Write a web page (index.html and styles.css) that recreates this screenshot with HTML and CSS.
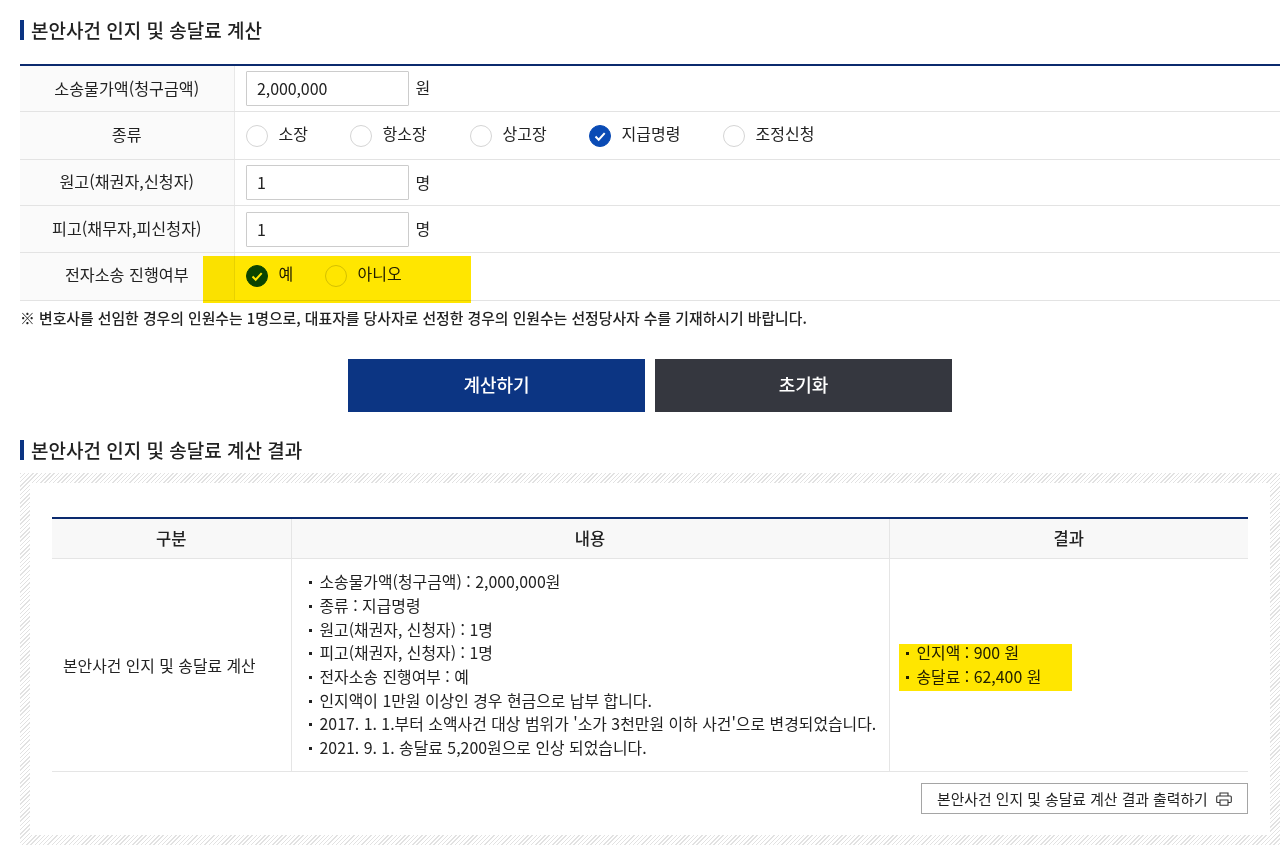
FILE: index.html
```html
<!DOCTYPE html>
<html lang="ko">
<head>
<meta charset="utf-8">
<title>본안사건 인지 및 송달료 계산</title>
<link rel="stylesheet" href="styles.css">
</head>
<body>
<main class="page">
  <h2 class="title first">본안사건 인지 및 송달료 계산</h2>
  <div class="form-wrap">
    <table class="form">
      <tr class="r1">
        <th>소송물가액(청구금액)</th>
        <td><div class="line"><span class="input">2,000,000</span><span class="unit">원</span></div></td>
      </tr>
      <tr class="r2">
        <th>종류</th>
        <td>
          <div class="radios">
            <span class="radio w1"><i class="dot"></i>소장</span>
            <span class="radio w2"><i class="dot"></i>항소장</span>
            <span class="radio w3"><i class="dot"></i>상고장</span>
            <span class="radio w4"><i class="dot on"><svg viewBox="0 0 22 22"><path d="M6.5 11.500l3.200 3.200 6-6.600" fill="none" stroke="#fff" stroke-width="2"/></svg></i>지급명령</span>
            <span class="radio"><i class="dot"></i>조정신청</span>
          </div>
        </td>
      </tr>
      <tr class="r3">
        <th>원고(채권자,신청자)</th>
        <td><div class="line"><span class="input">1</span><span class="unit">명</span></div></td>
      </tr>
      <tr class="r4">
        <th>피고(채무자,피신청자)</th>
        <td><div class="line"><span class="input">1</span><span class="unit">명</span></div></td>
      </tr>
      <tr class="r5">
        <th>전자소송 진행여부</th>
        <td>
          <div class="radios">
            <span class="radio w5"><i class="dot on"><svg viewBox="0 0 22 22"><path d="M6.5 11.500l3.200 3.200 6-6.600" fill="none" stroke="#fff" stroke-width="2"/></svg></i>예</span>
            <span class="radio"><i class="dot"></i>아니오</span>
          </div>
        </td>
      </tr>
    </table>
    <div class="marker"></div>
  </div>
  <p class="note">※ 변호사를 선임한 경우의 인원수는 1명으로, 대표자를 당사자로 선정한 경우의 인원수는 선정당사자 수를 기재하시기 바랍니다.</p>
  <div class="actions">
    <button class="btn calc" type="button">계산하기</button>
    <button class="btn reset" type="button">초기화</button>
  </div>
  <h2 class="title second">본안사건 인지 및 송달료 계산 결과</h2>
  <section class="hatch">
    <div class="inner">
      <table class="result">
        <colgroup><col class="c1"><col class="c2"><col class="c3"></colgroup>
        <thead>
          <tr><th>구분</th><th>내용</th><th>결과</th></tr>
        </thead>
        <tbody>
          <tr>
            <td class="name">본안사건 인지 및 송달료 계산</td>
            <td class="detail">
              <ul class="list">
                <li>소송물가액(청구금액) : 2,000,000원</li>
                <li>종류 : 지급명령</li>
                <li>원고(채권자, 신청자) : 1명</li>
                <li>피고(채권자, 신청자) : 1명</li>
                <li>전자소송 진행여부 : 예</li>
                <li>인지액이 1만원 이상인 경우 현금으로 납부 합니다.</li>
                <li>2017. 1. 1.부터 소액사건 대상 범위가 '소가 3천만원 이하 사건'으로 변경되었습니다.</li>
                <li>2021. 9. 1. 송달료 5,200원으로 인상 되었습니다.</li>
              </ul>
            </td>
            <td class="sum">
              <ul class="list hl">
                <li>인지액 : 900 원</li>
                <li>송달료 : 62,400 원</li>
              </ul>
              <div class="marker2"></div>
            </td>
          </tr>
        </tbody>
      </table>
      <div class="print-row">
        <button class="print" type="button">본안사건 인지 및 송달료 계산 결과 출력하기
          <svg class="pic" viewBox="0 0 16 14"><path d="M4 4V1h8v3M4 10.500H1.600A.9.9 0 0 1 .7 9.600V5A1 1 0 0 1 1.700 4h12.600a1 1 0 0 1 1 1v4.600a.9.9 0 0 1-.9.9H12M4 8h8v5.300H4z" fill="none" stroke="#333" stroke-width="1.100"/></svg>
        </button>
      </div>
    </div>
  </section>
</main>
</body>
</html>
```
FILE: styles.css
```css
* { box-sizing: border-box; }
html, body { margin: 0; padding: 0; background: #fff; }
body {
  font-family: "Noto Sans CJK KR", "Noto Sans", sans-serif;
  color: #222;
  font-size: 16px;
}
.page { padding: 18px 0 8px 20px; overflow: hidden; }

.title {
  margin: 0;
  height: 24px;
  line-height: 24px;
  font-size: 19px;
  font-weight: 500;
  color: #222;
  display: flex;
  align-items: center;
  gap: 7px;
}
.title::before {
  content: "";
  width: 4px;
  height: 20px;
  background: #0b3482;
}
.title.second { margin-top: 26px; }

.form-wrap { position: relative; margin-top: 22px; }
.form {
  width: 100%;
  border-collapse: collapse;
  border-top: 2px solid #0b2a6e;
  table-layout: fixed;
}
.form th {
  width: 214px;
  background: #fafafa;
  font-weight: 400;
  font-size: 16.200px;
  text-align: center;
  border-bottom: 1px solid #e3e3e3;
  border-right: 1px solid #e8e8e8;
  padding: 0;
}
.form td {
  border-bottom: 1px solid #e3e3e3;
  padding: 0 0 0 11px;
}
.r1 { height: 46px; }
.r2 { height: 48px; }
.r3 { height: 46px; }
.r4 { height: 47px; }
.r5 { height: 48px; }
.form .r2 th { padding-bottom: 3px; }
.form .r3 th, .form .r4 th { padding-bottom: 2px; }
.form .r3 td, .form .r4 td { padding-top: 1px; }
.form .r5 th { padding-bottom: 5px; }
.form .r5 td { padding-bottom: 3px; }
.line { display: flex; align-items: center; gap: 7px; }
.input {
  width: 163px;
  height: 35px;
  border: 1px solid #ccc;
  border-radius: 1px;
  background: #fff;
  padding-left: 10.500px;
  line-height: 33px;
  font-size: 16px;
  letter-spacing: -0.1px;
  color: #222;
}
.unit { position: relative; top: -1px; }
.radios { display: flex; align-items: center; padding-bottom: 4px; }
.radio { display: flex; align-items: center; gap: 11px; font-size: 16px; }
.radio.w1 { width: 104px; }
.radio.w2 { width: 120px; }
.radio.w3 { width: 119px; }
.radio.w4 { width: 134px; }
.radio.w5 { width: 79px; }
.dot {
  display: block;
  width: 22px;
  height: 22px;
  border: 1px solid #d5d5d5;
  border-radius: 50%;
  background: #fff;
  position: relative;
  top: 3px;
}
.dot.on { background: #0a4bb5; border-color: #0a4bb5; }
.dot svg { display: block; width: 22px; height: 22px; margin: -1px; }
.marker {
  position: absolute;
  left: 183px;
  top: 192px;
  width: 268px;
  height: 47px;
  background: #ffe600;
  mix-blend-mode: multiply;
}

.note {
  margin: 6px 0 0;
  font-size: 14.850px;
  line-height: 22px;
  font-weight: 500;
  color: #222;
}
.actions {
  display: flex;
  justify-content: center;
  gap: 10px;
  margin: 30px 0 0 -20px;
  padding-left: 20px;
  width: 1280px;
}
.btn {
  width: 297px;
  height: 53px;
  border: 0;
  font-family: inherit;
  font-size: 18px;
  font-weight: 500;
  color: #fff;
  padding: 0 0 2px;
}
.calc { background: #0c3583; }
.reset { background: #35373f; }

.hatch {
  margin-top: 11px;
  padding: 10px;
  height: 372px;
  background: repeating-linear-gradient(135deg, #e2e2e2 0 1px, #fff 1px 3px);
}
.inner {
  background: #fff;
  height: 352px;
  padding: 34px 22px 0;
}
.result {
  width: 1196px;
  border-collapse: collapse;
  border-top: 2px solid #0b2a6e;
  table-layout: fixed;
}
.c1 { width: 239px; }
.c2 { width: 598px; }
.c3 { width: 359px; }
.result th {
  height: 41px;
  background: #f8f8f8;
  font-weight: 500;
  font-size: 16.500px;
  text-align: center;
  border-bottom: 1px solid #e5e5e5;
  padding: 0;
}
.result th + th, .result td + td { border-left: 1px solid #e5e5e5; }
.result td { height: 213px; border-bottom: 1px solid #e5e5e5; padding: 0; }
.name { padding-left: 11px !important; font-size: 15.850px; }
.detail { padding: 0 0 0 17px !important; }
.sum { padding: 0 0 0 9px !important; position: relative; }
.list { list-style: none; margin: 0; padding: 0; font-size: 15.900px; line-height: 23.700px; }
.list li { padding-left: 11px; position: relative; white-space: nowrap; }
.list li::before {
  content: "";
  position: absolute;
  left: 0;
  top: 11px;
  width: 3px;
  height: 3px;
  background: #222;
}
.hl { padding-left: 7px; line-height: 24.500px; }
.marker2 {
  position: absolute;
  left: 9px;
  top: 85px;
  width: 173px;
  height: 47px;
  background: #ffe600;
  mix-blend-mode: multiply;
}
.print-row { display: flex; justify-content: flex-end; margin-top: 11px; }
.print {
  width: 327px;
  height: 31px;
  background: #fff;
  border: 1px solid #a5a5a5;
  font-family: inherit;
  font-size: 14.850px;
  color: #222;
  display: flex;
  align-items: center;
  gap: 8px;
  padding: 0 0 0 15px;
}
.pic { width: 16px; height: 14px; display: block; }
```
